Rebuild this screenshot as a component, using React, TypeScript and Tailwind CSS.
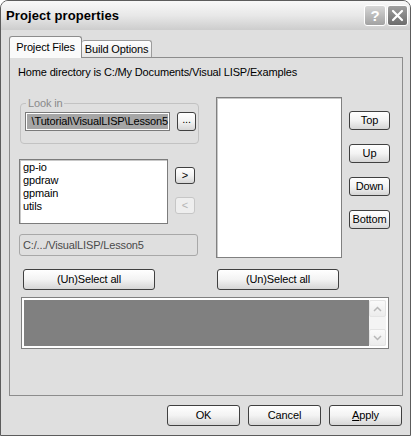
import type { ReactNode } from "react";

const FONT = "font-['Liberation_Sans',Arial,sans-serif]";

function XpButton({ className = "", disabled = false, children }: { className?: string; disabled?: boolean; children: ReactNode }) {
    return (
        <button
            className={
                "flex items-center justify-center rounded-[3px] border text-[11px] leading-none tracking-[-0.15px] " +
                (disabled
                    ? "border-[#c6c6c6] bg-[#eeeeee] text-[#b4b4b4] "
                    : "border-[#404040] bg-gradient-to-b from-white via-[#f3f3f3] to-[#d6d6d6] text-black ") +
                className
            }
        >
            {children}
        </button>
    );
}

function ScrollArrow({ up }: { up?: boolean }) {
    return (
        <div className="flex h-[17px] w-[17px] items-center justify-center rounded-[2px] border border-[#e4e4e4] bg-gradient-to-b from-[#fafafa] to-[#ececec]">
            <svg width="9" height="6" viewBox="0 0 9 6">
                <path d={up ? "M1 5 L4.5 1.5 L8 5" : "M1 1 L4.5 4.5 L8 1"} fill="none" stroke="#b8b8b8" strokeWidth="1.5" />
            </svg>
        </div>
    );
}

export default function App() {
    return (
        <div className={"h-[437px] w-[412px] bg-white text-black " + FONT}>
            <div className="flex h-[436px] w-[411px] flex-col rounded-t-[8px] border border-[#5c5c5c] bg-[#dfdfdf]">
                {/* title bar */}
                <div className="flex h-[29px] items-center justify-between rounded-t-[7px] bg-gradient-to-b from-[#f8f8f8] via-[#e8e8e8] to-[#cdcdcd] pl-[5px] pr-[2px]">
                    <span className="text-[13px] font-bold tracking-[0.1px]">Project properties</span>
                    <div className="flex gap-[1px]">
                        <div className="flex h-[21px] w-[22px] items-center justify-center rounded-[3px] border border-white bg-gradient-to-b from-[#d6d6d6] to-[#a2a2a2] text-[15px] font-bold leading-none text-white">
                            ?
                        </div>
                        <div className="flex h-[21px] w-[21px] items-center justify-center rounded-[3px] border border-white bg-gradient-to-b from-[#a0a0a0] to-[#6c6c6c]">
                            <svg width="13" height="13" viewBox="0 0 13 13">
                                <path d="M2 2 L11 11 M11 2 L2 11" stroke="white" strokeWidth="2.2" strokeLinecap="round" />
                            </svg>
                        </div>
                    </div>
                </div>

                <div className="flex flex-1 flex-col px-[8px] tracking-[-0.15px]">
                    {/* tabs */}
                    <div className="relative z-10 -mb-px mt-[6px] flex h-[22px] items-end">
                        <div className="flex h-[22px] w-[73px] items-start justify-center rounded-t-[3px] border border-b-0 border-[#8c8c8c] bg-[#fafafa] pt-[4px] text-[11px] leading-[13px]">
                            Project Files
                        </div>
                        <div className="mb-px flex h-[17px] w-[70px] items-center justify-center rounded-t-[3px] border border-b-0 border-l-0 border-[#9c9c9c] bg-gradient-to-b from-white to-[#e6e6e6] text-[11px] leading-[13px]">
                            Build Options
                        </div>
                    </div>

                    {/* tab panel */}
                    <div className="h-[339px] w-[394px] border border-[#8c8c8c] bg-[#dfdfdf]">
                        <div className="ml-[8px] mt-[8px] h-[13px] text-[11px] leading-[13px]">
                            Home directory is C:/My Documents/Visual LISP/Examples
                        </div>

                        <div className="mt-[18px] flex h-[161px]">
                            <div className="ml-[9px] flex w-[180px] flex-col">
                                <fieldset className="ml-[1px] h-[47px] w-[179px] rounded-[4px] border border-[#c2c2c2]">
                                    <legend className="ml-[5px] px-[2px] text-[11px] leading-[12px] text-[#8a8a8a]">Look in</legend>
                                    <div className="ml-[4px] mt-[3px] flex items-center">
                                        <div className="flex h-[19px] w-[145px] overflow-hidden whitespace-nowrap border border-[#7a7a7a] bg-white p-[1px]">
                                            <span className="flex-1 bg-[#a6a6a6] text-right text-[11px] leading-[15px]">
                                                \Tutorial\VisualLISP\Lesson5
                                            </span>
                                        </div>
                                        <XpButton className="ml-[7px] h-[19px] w-[19px] pb-[4px]">...</XpButton>
                                    </div>
                                </fieldset>

                                <div className="mt-[15px] flex">
                                    <div className="h-[65px] w-[149px] border border-[#7c7c7c] bg-white pl-[3px] pt-[1px] text-[11px] leading-[13px] shadow-[inset_1px_1px_0_#c8c8c8]">
                                        <div>gp-io</div>
                                        <div>gpdraw</div>
                                        <div>gpmain</div>
                                        <div>utils</div>
                                    </div>
                                    <div className="ml-[7px] flex flex-col">
                                        <XpButton className="mt-[8px] h-[17px] w-[20px]">&gt;</XpButton>
                                        <XpButton disabled className="mt-[13px] h-[17px] w-[20px]">&lt;</XpButton>
                                    </div>
                                </div>

                                <div className="mt-[10px] flex h-[22px] w-[179px] items-center rounded-[3px] border border-[#a8a8a8] pl-[3px] text-[11px] text-[#4a4a4a]">
                                    C:/.../VisualLISP/Lesson5
                                </div>
                            </div>

                            <div className="ml-[17px] h-[161px] w-[126px] border border-[#808080] bg-white shadow-[inset_1px_1px_0_#c8c8c8]" />

                            <div className="ml-[7px] flex w-[41px] flex-col">
                                <XpButton className="mt-[14px] h-[19px] w-[41px]">Top</XpButton>
                                <XpButton className="mt-[14px] h-[19px] w-[41px]">Up</XpButton>
                                <XpButton className="mt-[14px] h-[19px] w-[41px]">Down</XpButton>
                                <XpButton className="mt-[14px] h-[19px] w-[41px]">Bottom</XpButton>
                            </div>
                        </div>

                        <div className="mt-[11px] flex">
                            <XpButton className="ml-[13px] h-[21px] w-[132px]">(Un)Select all</XpButton>
                            <XpButton className="ml-[62px] h-[21px] w-[122px]">(Un)Select all</XpButton>
                        </div>

                        <div className="ml-[11px] mt-[7px] flex h-[52px] w-[368px] border border-[#7f7f7f] bg-white p-[2px]">
                            <div className="flex-1 bg-[#808080]" />
                            <div className="flex w-[17px] flex-col justify-between bg-[#f4f4f4]">
                                <ScrollArrow up />
                                <ScrollArrow />
                            </div>
                        </div>
                    </div>

                    {/* dialog buttons */}
                    <div className="mt-[9px] flex justify-end gap-[8px]">
                        <XpButton className="h-[21px] w-[73px]">OK</XpButton>
                        <XpButton className="h-[21px] w-[73px]">Cancel</XpButton>
                        <XpButton className="h-[21px] w-[73px]">
                            <span>
                                <span className="underline">A</span>pply
                            </span>
                        </XpButton>
                    </div>
                </div>
            </div>
        </div>
    );
}
